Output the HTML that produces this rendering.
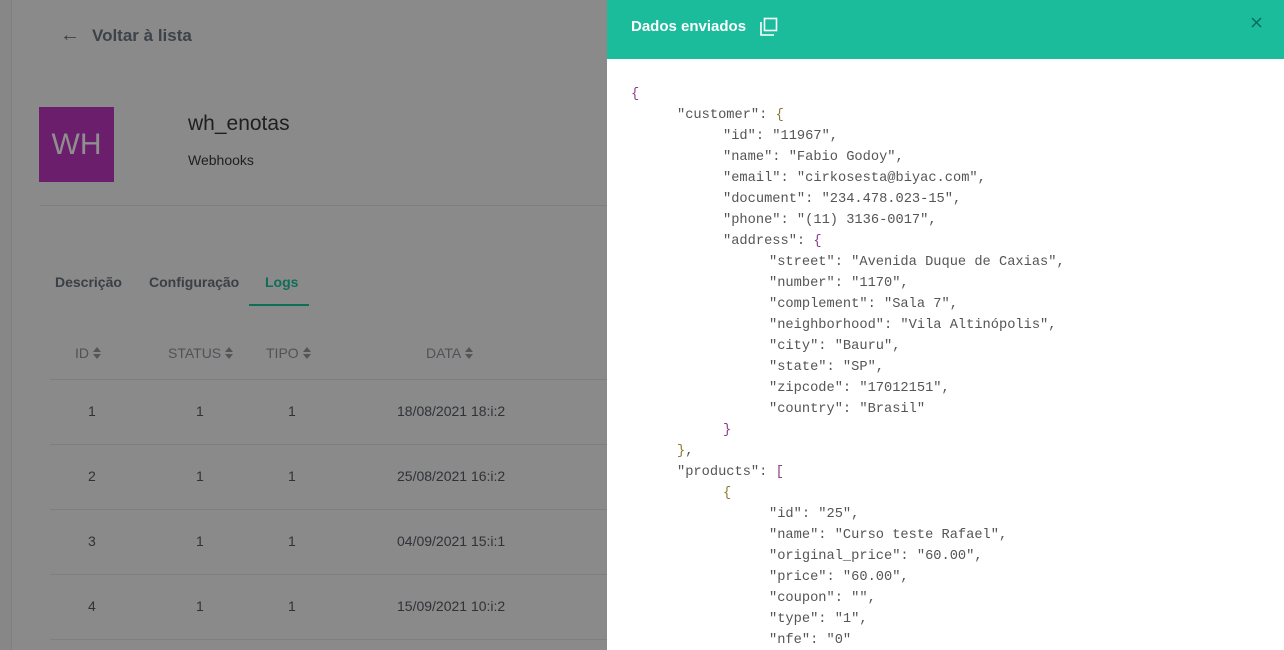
<!DOCTYPE html>
<html><head><meta charset="utf-8"><style>
*{margin:0;padding:0;box-sizing:border-box}
html,body{width:1284px;height:650px;overflow:hidden}
body{background:#8a8a8a;font-family:"Liberation Sans",sans-serif;position:relative}
.a{position:absolute}
.strip{left:0;top:0;width:12px;height:650px;background:#878787;border-right:1px solid #808080}
.back{left:60px;top:24px;font-size:17px;font-weight:bold;color:#3d434a}
.logo{left:39px;top:107px;width:75px;height:75px;background:#6a1e6c;color:#8f8f8f;font-size:30px;text-align:center;line-height:75px}
.t{color:#1f1f1f}
.hr{left:40px;width:567px;height:1px;background:#7f7f7f}
.tab{top:274px;font-size:14px;font-weight:bold;color:#3a3f45}
.th{top:345px;font-size:14px;color:#4f5257}
.th svg{vertical-align:-1px;margin-left:4px}
.td{font-size:14px;color:#2f3236}
.panel{left:607px;top:0;width:677px;height:650px;background:#fff;overflow:hidden}
.hdr{height:59px;background:#1abc9c;position:relative}
.code{position:absolute;left:24px;top:84px;font-family:"Liberation Mono",monospace;font-size:13.7px;line-height:21px;color:#555}
.code div{white-space:pre;height:21px}
.l1{padding-left:46px}.l2{padding-left:92px}.l3{padding-left:138px}
.p{color:#8b3b8b}.y{color:#8b7a33}
</style></head><body>
<div class="a strip"></div>
<div class="a back"><span style="font-weight:normal;font-size:20px;margin-right:12px">&#8592;</span>Voltar à lista</div>
<div class="a logo">WH</div>
<div class="a t" style="left:188px;top:112px;font-size:21px">wh_enotas</div>
<div class="a t" style="left:188px;top:152px;font-size:14px">Webhooks</div>
<div class="a hr" style="top:205px"></div>
<div class="a tab" style="left:55px">Descrição</div>
<div class="a tab" style="left:149px">Configuração</div>
<div class="a tab" style="left:265px;color:#0f6e58">Logs</div>
<div class="a" style="left:249px;top:304px;width:60px;height:2px;background:#0f6e58"></div>
<div class="a th" style="left:75px">ID<svg width="8" height="12" viewBox="0 0 8 12" fill="#555"><path d="M4 0L8 5H0zM4 12L0 7H8z"/></svg></div>
<div class="a th" style="left:168px">STATUS<svg width="8" height="12" viewBox="0 0 8 12" fill="#555"><path d="M4 0L8 5H0zM4 12L0 7H8z"/></svg></div>
<div class="a th" style="left:266px">TIPO<svg width="8" height="12" viewBox="0 0 8 12" fill="#555"><path d="M4 0L8 5H0zM4 12L0 7H8z"/></svg></div>
<div class="a th" style="left:426px">DATA<svg width="8" height="12" viewBox="0 0 8 12" fill="#555"><path d="M4 0L8 5H0zM4 12L0 7H8z"/></svg></div>
<div class="a hr" style="left:50px;top:379px"></div>
<div class="a hr" style="left:50px;top:444px"></div>
<div class="a hr" style="left:50px;top:509px"></div>
<div class="a hr" style="left:50px;top:574px"></div>
<div class="a hr" style="left:50px;top:639px"></div>
<div class="a td" style="left:88px;top:403px">1</div><div class="a td" style="left:196px;top:403px">1</div><div class="a td" style="left:288px;top:403px">1</div><div class="a td" style="left:397px;top:403px">18/08/2021 18:i:2</div>
<div class="a td" style="left:88px;top:468px">2</div><div class="a td" style="left:196px;top:468px">1</div><div class="a td" style="left:288px;top:468px">1</div><div class="a td" style="left:397px;top:468px">25/08/2021 16:i:2</div>
<div class="a td" style="left:88px;top:533px">3</div><div class="a td" style="left:196px;top:533px">1</div><div class="a td" style="left:288px;top:533px">1</div><div class="a td" style="left:397px;top:533px">04/09/2021 15:i:1</div>
<div class="a td" style="left:88px;top:598px">4</div><div class="a td" style="left:196px;top:598px">1</div><div class="a td" style="left:288px;top:598px">1</div><div class="a td" style="left:397px;top:598px">15/09/2021 10:i:2</div>
<div class="a panel">
<div class="hdr">
<div class="a" style="left:24px;top:18px;font-size:15px;font-weight:bold;color:#fff">Dados enviados</div>
<svg class="a" style="left:152px;top:17px" width="20" height="20" viewBox="0 0 20 20" fill="none" stroke="#fff" stroke-width="1.6"><rect x="5.5" y="1.5" width="12" height="12"/><path d="M2 5v13h13"/></svg>
<svg class="a" style="left:644px;top:17px" width="11" height="11" viewBox="0 0 11 11" stroke="#0e6b58" stroke-width="1.5"><path d="M1 1L10 10M10 1L1 10"/></svg>
</div>
<div class="code"><div><span class="p">{</span></div><div class="l1">"customer": <span class="y">{</span></div><div class="l2">"id": "11967",</div><div class="l2">"name": "Fabio Godoy",</div><div class="l2">"email": "cirkosesta@biyac.com",</div><div class="l2">"document": "234.478.023-15",</div><div class="l2">"phone": "(11) 3136-0017",</div><div class="l2">"address": <span class="p">{</span></div><div class="l3">"street": "Avenida Duque de Caxias",</div><div class="l3">"number": "1170",</div><div class="l3">"complement": "Sala 7",</div><div class="l3">"neighborhood": "Vila Altinópolis",</div><div class="l3">"city": "Bauru",</div><div class="l3">"state": "SP",</div><div class="l3">"zipcode": "17012151",</div><div class="l3">"country": "Brasil"</div><div class="l2"><span class="p">}</span></div><div class="l1"><span class="y">}</span>,</div><div class="l1">"products": <span class="p">[</span></div><div class="l2"><span class="y">{</span></div><div class="l3">"id": "25",</div><div class="l3">"name": "Curso teste Rafael",</div><div class="l3">"original_price": "60.00",</div><div class="l3">"price": "60.00",</div><div class="l3">"coupon": "",</div><div class="l3">"type": "1",</div><div class="l3">"nfe": "0"</div></div>
</div>
</body></html>
